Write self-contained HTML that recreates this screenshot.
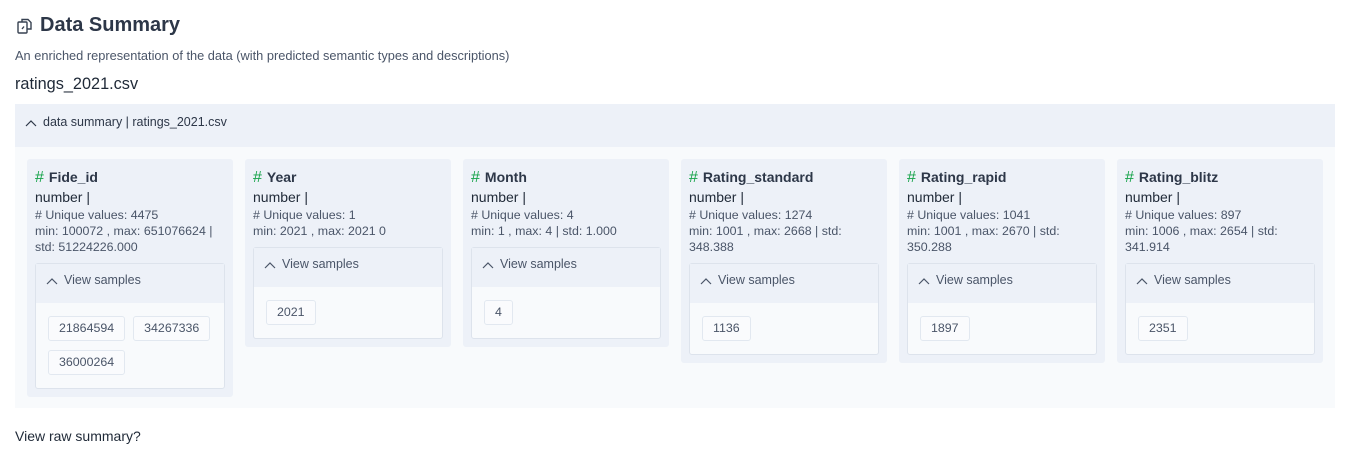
<!DOCTYPE html>
<html><head><style>
*{box-sizing:border-box;margin:0;padding:0}
body{width:1347px;height:454px;background:#fff;font-family:"Liberation Sans",sans-serif;color:#1f2937;position:relative;overflow:hidden}
h1{position:absolute;left:16px;top:14px;font-size:20px;font-weight:bold;color:#2d3748;display:flex;align-items:center;gap:6px}
.sub{position:absolute;left:15px;top:48px;font-size:12.8px;color:#4a5568}
.file{position:absolute;left:15px;top:75px;font-size:16.3px;color:#1f2937}
.panel{position:absolute;left:15px;top:104px;width:1320px;height:304px;background:#f8fafc}
.ph{height:43px;background:#edf1f8;font-size:12.5px;color:#2d3748;display:flex;align-items:flex-start;padding:11px 0 0 10px;gap:6px}
.ph svg,.sh svg{margin-top:4px}
.card{position:absolute;top:55px;width:206px;background:#edf1f8;border-radius:3px;padding:8px 8px 8px 8px}
.t{font-size:14px;font-weight:bold;line-height:20px;color:#2d3748}
.t span{color:#16a34a;font-weight:normal;font-size:16px;margin-right:5px}
.ty{font-size:14px;line-height:19px;color:#1f2937}
.st{font-size:12.4px;line-height:16px;color:#4a5568}
.sb{margin-top:8px;border:1px solid #dde3ec;border-radius:3px;background:#f8fafc}
.sh{height:39px;background:#edf1f8;font-size:12.5px;color:#4a5568;display:flex;align-items:flex-start;padding:9px 0 0 10px;gap:6px}
.bd{padding:13px 12px 13px;display:flex;flex-wrap:wrap;gap:9px 8px}
.chip{height:25px;border:1px solid #e2e8f0;border-radius:3px;font-size:12.4px;color:#4a5568;padding:0 10px;line-height:23px;background:#fafbfd}
.raw{position:absolute;left:15px;top:428px;font-size:14px;color:#1f2937}
</style></head><body>
<h1><svg width="18" height="18" viewBox="0 0 18 18" fill="none" stroke="#374151" stroke-width="1.4"><rect x="2" y="5" width="9" height="11" rx="1"/><path d="M6 5V2.5h6l3 3V12h-4"/><path d="M8 9.5l-2 2.5"/></svg>Data Summary</h1>
<div class="sub">An enriched representation of the data (with predicted semantic types and descriptions)</div>
<div class="file">ratings_2021.csv</div>
<div class="panel">
<div class="ph"><svg width="12" height="8" viewBox="0 0 12 8" fill="none" stroke="#2d3748" stroke-width="1.2"><path d="M1 7l5-5 5 5"/></svg>data summary | ratings_2021.csv</div>

<div class="card" style="left:12px"><div class="t"><span>#</span>Fide_id</div><div class="ty">number |</div><div class="st"># Unique values: 4475<br>min: 100072 , max: 651076624 |<br>std: 51224226.000</div>
<div class="sb"><div class="sh"><svg width="12" height="8" viewBox="0 0 12 8" fill="none" stroke="#4a5568" stroke-width="1.2"><path d="M1 7l5-5 5 5"/></svg>View samples</div><div class="bd"><div class="chip">21864594</div><div class="chip">34267336</div><div class="chip">36000264</div></div></div></div>

<div class="card" style="left:230px"><div class="t"><span>#</span>Year</div><div class="ty">number |</div><div class="st"># Unique values: 1<br>min: 2021 , max: 2021 0</div>
<div class="sb"><div class="sh"><svg width="12" height="8" viewBox="0 0 12 8" fill="none" stroke="#4a5568" stroke-width="1.2"><path d="M1 7l5-5 5 5"/></svg>View samples</div><div class="bd"><div class="chip">2021</div></div></div></div>

<div class="card" style="left:448px"><div class="t"><span>#</span>Month</div><div class="ty">number |</div><div class="st"># Unique values: 4<br>min: 1 , max: 4 | std: 1.000</div>
<div class="sb"><div class="sh"><svg width="12" height="8" viewBox="0 0 12 8" fill="none" stroke="#4a5568" stroke-width="1.2"><path d="M1 7l5-5 5 5"/></svg>View samples</div><div class="bd"><div class="chip">4</div></div></div></div>

<div class="card" style="left:666px"><div class="t"><span>#</span>Rating_standard</div><div class="ty">number |</div><div class="st"># Unique values: 1274<br>min: 1001 , max: 2668 | std:<br>348.388</div>
<div class="sb"><div class="sh"><svg width="12" height="8" viewBox="0 0 12 8" fill="none" stroke="#4a5568" stroke-width="1.2"><path d="M1 7l5-5 5 5"/></svg>View samples</div><div class="bd"><div class="chip">1136</div></div></div></div>

<div class="card" style="left:884px"><div class="t"><span>#</span>Rating_rapid</div><div class="ty">number |</div><div class="st"># Unique values: 1041<br>min: 1001 , max: 2670 | std:<br>350.288</div>
<div class="sb"><div class="sh"><svg width="12" height="8" viewBox="0 0 12 8" fill="none" stroke="#4a5568" stroke-width="1.2"><path d="M1 7l5-5 5 5"/></svg>View samples</div><div class="bd"><div class="chip">1897</div></div></div></div>

<div class="card" style="left:1102px"><div class="t"><span>#</span>Rating_blitz</div><div class="ty">number |</div><div class="st"># Unique values: 897<br>min: 1006 , max: 2654 | std:<br>341.914</div>
<div class="sb"><div class="sh"><svg width="12" height="8" viewBox="0 0 12 8" fill="none" stroke="#4a5568" stroke-width="1.2"><path d="M1 7l5-5 5 5"/></svg>View samples</div><div class="bd"><div class="chip">2351</div></div></div></div>
</div>
<div class="raw">View raw summary?</div>
</body></html>
